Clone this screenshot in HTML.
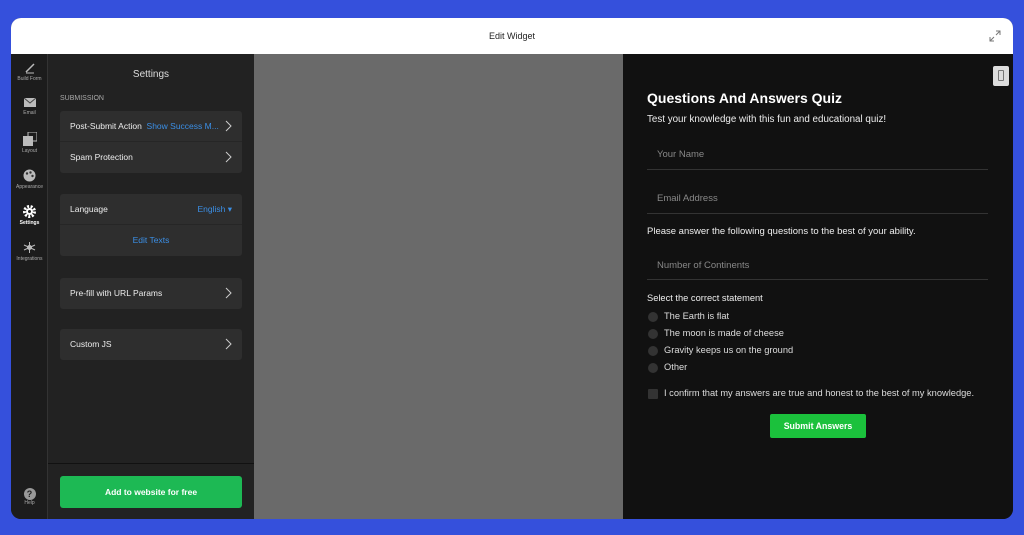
<!DOCTYPE html>
<html><head><style>
*{margin:0;padding:0;box-sizing:border-box}
body{width:1024px;height:535px;background:#3550dc;font-family:"Liberation Sans",sans-serif;position:relative;overflow:hidden}
.a{position:absolute}
.win{left:11px;top:18px;width:1002px;height:501px;border-radius:10px;overflow:hidden;background:#202020}
.hdr{left:0;top:0;width:1002px;height:36px;background:#fff;font-size:9px;color:#222;text-align:center;line-height:36px}
.side{left:0;top:36px;width:37px;height:465px;background:#1c1c1c;border-right:1px solid #333}
.si{position:absolute;left:0;width:37px;text-align:center;font-size:5px;color:#aaa}
.panel{left:37px;top:36px;width:206px;height:465px;background:#222}
.card{position:absolute;left:12px;width:182px;background:#2e2e2e;border-radius:3px}
.row{height:31px;line-height:31px;font-size:8.5px;color:#eee;padding-left:10px;position:relative;border-bottom:1px solid #262626}
.chev{position:absolute;right:10px;top:9px;width:7px;height:12px}
.blue{color:#3b8fe6}
.mid{left:243px;top:36px;width:369px;height:465px;background:#6a6a6a}
.right{left:612px;top:36px;width:390px;height:465px;background:#111;color:#eee}
.ip{position:absolute;left:24px;width:341px;border-bottom:1px solid #333;font-size:9.5px;color:#888;padding-left:10px}
.rad{position:absolute;left:25px;font-size:9.3px;color:#ddd}
.rad i{display:inline-block;width:10px;height:10px;border-radius:50%;background:#333;vertical-align:middle;margin-right:6px}
</style></head><body>
<div class="a win">
 <div class="a hdr">Edit Widget
  <svg class="a" style="right:12px;top:12px" width="12" height="12" viewBox="0 0 12 12" fill="none" stroke="#777" stroke-width="1"><path d="M7 1h4v4M11 1L7 5M5 11H1V7M1 11l4-4"/></svg></div>
 <div class="a side">
  <div class="si" style="top:8px"><svg width="12" height="12" viewBox="0 0 12 12"><path d="M2 10L10 2" stroke="#bbb" stroke-width="1.5"/><path d="M2 11h8" stroke="#bbb"/></svg><br>Build Form</div>
  <div class="si" style="top:44px"><svg width="12" height="10"><rect width="12" height="9" fill="#bbb"/><path d="M0 0l6 5 6-5" stroke="#444" fill="none"/></svg><br>Email</div>
  <div class="si" style="top:78px"><svg width="14" height="14"><rect x="5" y="0" width="9" height="9" fill="none" stroke="#bbb"/><rect x="0" y="4" width="10" height="10" fill="#bbb"/></svg><br>Layout</div>
  <div class="si" style="top:115px"><svg width="13" height="13"><circle cx="6.5" cy="6.5" r="6" fill="#bbb"/><circle cx="4" cy="4.5" r="1.2" fill="#333"/><circle cx="7.5" cy="3.5" r="1.2" fill="#333"/><circle cx="9.5" cy="7" r="1.2" fill="#333"/></svg><br>Appearance</div>
  <div class="si" style="top:151px;color:#fff;font-weight:bold"><svg width="13" height="13"><circle cx="6.5" cy="6.5" r="5" fill="none" stroke="#fff" stroke-width="3" stroke-dasharray="2 1.5"/><circle cx="6.5" cy="6.5" r="3.5" fill="#fff"/><circle cx="6.5" cy="6.5" r="1.5" fill="#1c1c1c"/></svg><br>Settings</div>
  <div class="si" style="top:187px"><svg width="13" height="13" stroke="#bbb"><path d="M6.5 1v11M1 4l11 5M1 9l11-5"/><circle cx="6.5" cy="6.5" r="2" fill="#bbb"/></svg><br>Integrations</div>
  <div class="si" style="top:434px"><div style="width:12px;height:12px;border-radius:50%;background:#999;color:#222;font-size:9px;font-weight:bold;line-height:12px;margin:0 auto">?</div>Help</div>
 </div>
 <div class="a panel">
  <div class="a" style="left:0;width:206px;top:15px;text-align:center;font-size:10px;color:#ddd">Settings</div>
  <div class="a" style="left:12px;top:41px;font-size:7px;color:#aaa">SUBMISSION</div>
  <div class="card" style="top:57px"><div class="row">Post-Submit Action <span class="blue">&nbsp;Show Success M...</span><svg class="chev"><path d="M1 1l5 5-5 5" stroke="#ccc" fill="none"/></svg></div><div class="row" style="border:0">Spam Protection<svg class="chev"><path d="M1 1l5 5-5 5" stroke="#ccc" fill="none"/></svg></div></div>
  <div class="card" style="top:140px"><div class="row">Language<span class="blue" style="position:absolute;right:10px">English ▾</span></div><div class="row blue" style="text-align:center;padding:0;border:0">Edit Texts</div></div>
  <div class="card" style="top:224px"><div class="row" style="border:0">Pre-fill with URL Params<svg class="chev"><path d="M1 1l5 5-5 5" stroke="#ccc" fill="none"/></svg></div></div>
  <div class="card" style="top:275px"><div class="row" style="border:0">Custom JS<svg class="chev"><path d="M1 1l5 5-5 5" stroke="#ccc" fill="none"/></svg></div></div>
  <div class="a" style="left:0;top:409px;width:206px;height:1px;background:#111"></div>
  <div class="a" style="left:12px;top:422px;width:182px;height:32px;background:#1db954;border-radius:3px;color:#fff;font-size:8.5px;font-weight:bold;text-align:center;line-height:32px">Add to website for free</div>
 </div>
 <div class="a mid"></div>
 <div class="a right">
  <div class="a" style="right:4px;top:12px;width:16px;height:20px;background:#ddd;border-radius:2px"><div style="margin:4px auto;width:6px;height:11px;border:1px solid #777;border-radius:1px"></div></div>
  <div class="a" style="left:24px;top:36px;font-size:14px;font-weight:bold;color:#fff">Questions And Answers Quiz</div>
  <div class="a" style="left:24px;top:60px;font-size:9.8px">Test your knowledge with this fun and educational quiz!</div>
  <div class="ip" style="top:95px;height:21px">Your Name</div>
  <div class="ip" style="top:139px;height:21px">Email Address</div>
  <div class="a" style="left:24px;top:172px;font-size:9.5px">Please answer the following questions to the best of your ability.</div>
  <div class="ip" style="top:206px;height:20px">Number of Continents</div>
  <div class="a" style="left:24px;top:239px;font-size:9.3px">Select the correct statement</div>
  <div class="rad" style="top:257px"><i></i>The Earth is flat</div>
  <div class="rad" style="top:274px"><i></i>The moon is made of cheese</div>
  <div class="rad" style="top:291px"><i></i>Gravity keeps us on the ground</div>
  <div class="rad" style="top:308px"><i></i>Other</div>
  <div class="rad" style="top:334px"><i style="border-radius:1px"></i>I confirm that my answers are true and honest to the best of my knowledge.</div>
  <div class="a" style="left:147px;top:360px;width:96px;height:24px;background:#1bc13c;border-radius:2px;color:#fff;font-size:8.8px;font-weight:bold;text-align:center;line-height:24px">Submit Answers</div>
 </div>
</div>
</body></html>
